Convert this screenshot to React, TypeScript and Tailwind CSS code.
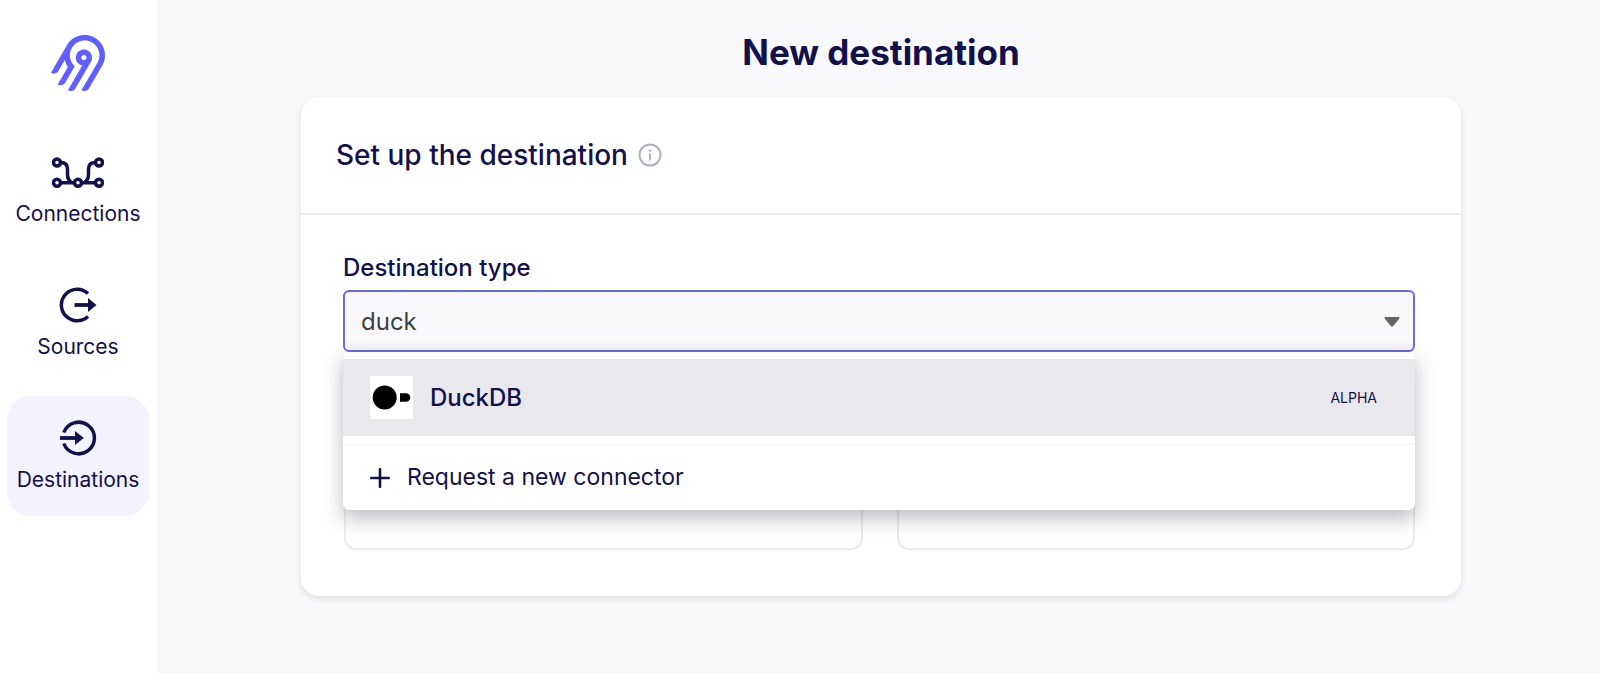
import type { ReactNode } from "react";
import { SiAirbyte } from "react-icons/si";

function ConnectionsIcon() {
  return (
    <svg viewBox="0 0 52 32" className="h-8 w-[52px]" fill="none" stroke="currentColor" strokeWidth="3.500">
      <circle cx="5" cy="6.500" r="3.500" />
      <circle cx="47" cy="6.500" r="3.500" />
      <circle cx="5" cy="26.700" r="3.500" />
      <circle cx="26" cy="26.700" r="3.500" />
      <circle cx="47" cy="26.700" r="3.500" />
      <path d="M8.500 26.700H22.500M29.500 26.700H43.500" />
      <path d="M8.500 6.500C13 6.500 15.500 8.500 15.500 13V18.500C15.500 22.500 17 25 20 26.700" />
      <path d="M43.500 6.500C39 6.500 36.500 8.500 36.500 13V18.500C36.500 22.500 35 25 32 26.700" />
    </svg>
  );
}

function SourcesIcon() {
  return (
    <svg viewBox="0 0 38 36" className="h-9 w-[38px]" fill="none" stroke="currentColor" strokeWidth="3.500">
      <path d="M29 6.500A15.800 15.800 0 1 0 29 29.500" />
      <path d="M15.500 18H30" strokeWidth="3.800" />
      <path d="M29 11L37.500 18L29 25Z" fill="currentColor" stroke="none" />
    </svg>
  );
}

function DestinationsIcon() {
  return (
    <svg viewBox="0 0 38 36" className="h-9 w-[38px]" fill="none" stroke="currentColor" strokeWidth="3.500">
      <path d="M4.800 12.500A15.800 15.800 0 1 1 4.800 23.500" />
      <path d="M1 18H17" strokeWidth="3.800" />
      <path d="M16 11L24.800 18L16 25Z" fill="currentColor" stroke="none" />
    </svg>
  );
}

function InfoIcon() {
  return (
    <svg viewBox="0 0 24 24" className="size-6" fill="none" stroke="currentColor" strokeWidth="2">
      <circle cx="12" cy="12" r="10.500" />
      <path d="M12 10.500V17.500" />
      <circle cx="12" cy="7.500" r="1.200" fill="currentColor" stroke="none" />
    </svg>
  );
}

function DuckDbLogo() {
  return (
    <svg viewBox="0 0 43 43" className="size-[43px]" aria-hidden="true">
      <rect width="43" height="43" fill="#fff" />
      <circle cx="14.700" cy="21.500" r="12" />
      <path d="M30 17.200H36A4.200 4.200 0 0 1 36 25.800H30Z" />
    </svg>
  );
}

type NavItemProps = { label: string; icon: ReactNode; active?: boolean };

function NavItem({ label, icon, active = false }: NavItemProps) {
  return (
    <li>
      <a
        href="#"
        aria-current={active ? "page" : undefined}
        className={`flex h-[120px] flex-col items-center gap-2 rounded-3xl pt-6 ${active ? "bg-[#f3f3ff]" : ""}`}
      >
        <span className="flex h-9 items-center">{icon}</span>
        <span className="text-[21px] leading-8">{label}</span>
      </a>
    </li>
  );
}

export default function App() {
  return (
    <div className="flex min-h-screen bg-[#f8f8fa] font-['Inter',sans-serif] text-[#13114c]">
      <nav className="w-[158px] shrink-0 border-r border-[#f4f4f8] bg-white pt-[35px] pr-2 pl-[7px]" aria-label="Main">
        <a href="#" aria-label="Home" className="mb-[39px] flex justify-center text-[#615eff]">
          <SiAirbyte className="size-14" />
        </a>
        <ul className="flex flex-col gap-[13px]">
          <NavItem label="Connections" icon={<ConnectionsIcon />} />
          <NavItem label="Sources" icon={<SourcesIcon />} />
          <NavItem label="Destinations" icon={<DestinationsIcon />} active />
        </ul>
      </nav>

      <main className="flex-1 pt-7 pr-[139px] pl-[143px]">
        <h1 className="mb-[21px] text-center text-[35px] leading-[48px] font-bold">New destination</h1>

        <section className="rounded-[18px] bg-white shadow-[0_3px_6px_rgba(26,25,77,0.11)]">
          <header className="flex h-[118px] items-center gap-[10px] border-b-2 border-[#ebebf0] px-[35px]">
            <h2 className="text-[28px] leading-9 font-medium">Set up the destination</h2>
            <button type="button" aria-label="About destinations" className="text-[#afafc1]">
              <InfoIcon />
            </button>
          </header>

          <div className="pt-[35px] pr-[46px] pb-[46px] pl-[42px]">
            <label htmlFor="destination-type" className="block text-2xl leading-9 font-medium">
              Destination type
            </label>

            <div className="relative mt-1">
              <div className="flex h-[62px] items-center rounded-md border-2 border-[#6b68f0] bg-[#f8f8fa] pr-[13px] pl-4">
                <input
                  id="destination-type"
                  type="text"
                  role="combobox"
                  aria-expanded="true"
                  aria-controls="destination-options"
                  defaultValue="duck"
                  className="min-w-0 flex-1 bg-transparent pt-px text-2xl text-[#404040] outline-none"
                />
                <svg viewBox="0 0 16 10" className="mt-[2px] h-[10px] w-4" fill="#666" aria-hidden="true">
                  <path d="M1.200 0H14.800Q16 .8 15.200 1.800L9 9.200Q8 10 7 9.200L.8 1.800Q0 .8 1.200 0Z" />
                </svg>
              </div>

              <div
                id="destination-options"
                role="listbox"
                aria-label="Destination type"
                className="absolute inset-x-0 top-full z-10 overflow-hidden rounded-md bg-white pt-[7px] shadow-[0_8px_20px_rgba(26,25,50,0.3)]"
              >
                <div role="option" aria-selected="true" className="flex h-[77px] items-center bg-[#e8e8ed] pr-[38px] pl-[27px]">
                  <DuckDbLogo />
                  <span className="ml-[17px] text-2xl font-medium">DuckDB</span>
                  <span className="ml-auto text-sm">ALPHA</span>
                </div>
                <button
                  type="button"
                  className="mt-2 flex h-[66px] w-full items-center gap-[17px] border-t border-[#f3f3f6] pl-[27px]"
                >
                  <svg viewBox="0 0 20 20" className="size-5" fill="none" stroke="currentColor" strokeWidth="2.600" strokeLinecap="round">
                    <path d="M10 1.200V18.800M1.200 10H18.800" />
                  </svg>
                  <span className="text-[23px]">Request a new connector</span>
                </button>
              </div>
            </div>

            <div className="mt-[30px] ml-px grid grid-cols-2 gap-[34px]">
              <div className="h-[168px] rounded-xl border-2 border-[#ebebf0]" />
              <div className="h-[168px] rounded-xl border-2 border-[#ebebf0]" />
            </div>
          </div>
        </section>
      </main>
    </div>
  );
}
